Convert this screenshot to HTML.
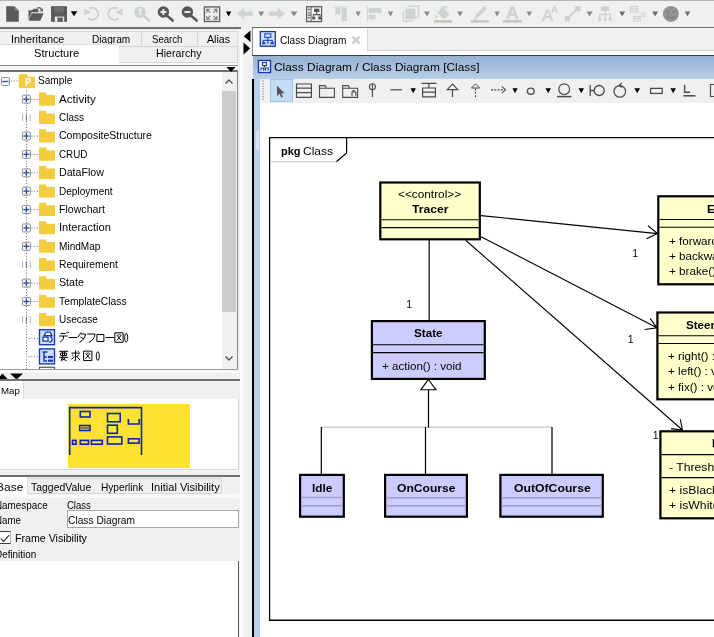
<!DOCTYPE html>
<html><head><meta charset="utf-8">
<style>
*{box-sizing:border-box;margin:0;padding:0}
html,body{width:714px;height:637px;overflow:hidden;background:#f0f0f0;font-family:"Liberation Sans",sans-serif;font-size:10.5px;color:#000}
.a{position:absolute}
.t{position:absolute;white-space:nowrap;line-height:1;transform-origin:0 0}
svg{position:absolute;overflow:visible}
#root{position:absolute;left:0;top:0;width:714px;height:637px;overflow:hidden;will-change:transform}
</style></head><body><div id="root">
<!-- ===== top toolbar ===== -->
<div class="a" style="left:0;top:0;width:714px;height:1px;background:#b4b4b4"></div>
<div class="a" style="left:0;top:27px;width:241px;height:2px;background:#6e6e6e"></div>
<div class="a" style="left:252px;top:27px;width:462px;height:1.5px;background:#6e6e6e"></div>
<svg style="left:0;top:0" width="714" height="27"><g transform="translate(6.2,6.2)"><path d="M0 0H8L12.6 4.6V15.6H0z" fill="#5a5a5a"/><path d="M8.4 0L12.6 4.2H8.4z" fill="#8a8a8a"/></g><g transform="translate(28,6.7)"><path d="M0.5 13.5V3.5H4L5.5 2H9.5L10.5 3.5V5.5H3.5L0.5 13.5z M3.8 6.5H15.7L12.3 14H0.6z" fill="#5a5a5a"/><path d="M8.5 1.2C10.5 -0.3 13 0.2 14 2.2L15 1.5V4.8H11.7L12.8 3.2C12 1.8 10.5 1.5 9.3 2.2z" fill="#6a6a6a"/></g><g transform="translate(51,6.2)"><path d="M0 0H16V15.6H0z" fill="#5a5a5a"/><rect x="3.2" y="0" width="9.6" height="6" fill="#6e6e6e"/><rect x="3.8" y="10.4" width="9.4" height="5.2" fill="#e8e8e8"/><rect x="6.2" y="11.4" width="5.6" height="4.2" fill="#5a5a5a"/><rect x="5" y="12" width="1.4" height="3" fill="#f0f0f0"/></g><path d="M70.8 11.2H77.3L74.05 16.2z" fill="#000"/><g transform="translate(83.7,6.4)"><path d="M5.5 2.4A5.9 5.9 0 1 1 4.4 11.6" fill="none" stroke="#cfd2d2" stroke-width="2.1"/><path d="M0.4 1.6V8.8L7.4 6.2z" fill="#cfd2d2"/></g><g transform="translate(106.9,6.4)"><path d="M10.5 2.4A5.9 5.9 0 1 0 11.6 11.6" fill="none" stroke="#cfd2d2" stroke-width="2.1"/><path d="M15.6 1.6V8.8L8.6 6.2z" fill="#cfd2d2"/></g><g transform="translate(134.2,6.2)"><circle cx="5.6" cy="5.8" r="5.7" fill="#cfd2d2"/><path d="M9 9.4L14.8 14.4" stroke="#cfd2d2" stroke-width="2.6" stroke-linecap="round"/><path d="M4.4 4L6.2 3V9" stroke="#f0f0f0" stroke-width="1.6" fill="none"/></g><g transform="translate(157.8,6.2)"><circle cx="5.6" cy="5.8" r="5.7" fill="#565656"/><path d="M9 9.4L14.8 14.4" stroke="#565656" stroke-width="2.6" stroke-linecap="round"/><path d="M2.6 5.8H8.6M5.6 2.8V8.8" stroke="#ececec" stroke-width="2"/></g><g transform="translate(181.8,6.2)"><circle cx="5.6" cy="5.8" r="5.7" fill="#565656"/><path d="M9 9.4L14.8 14.4" stroke="#565656" stroke-width="2.6" stroke-linecap="round"/><path d="M2.6 5.8H8.6" stroke="#ececec" stroke-width="2"/></g><g transform="translate(203.8,6.3)"><rect x="0.6" y="0.6" width="15.2" height="14.6" fill="#ededed" stroke="#5a5a5a" stroke-width="1.3"/><path d="M3 6.4V3H6.4M3 3L6.4 6.4 M9.6 3H13V6.4M13 3L9.6 6.4 M3 9.6V13H6.4M3 13L6.4 9.6 M9.6 13H13V9.6M13 13L9.6 9.6" fill="none" stroke="#767676" stroke-width="1.1"/></g><path d="M226 11.5H231.2L228.6 16.4z" fill="#000"/><g transform="translate(237,8)"><path d="M0 5.6L7.2 0V3.4H15.8V7.8H7.2V11.2z" fill="#cfd2d2"/></g><path d="M258 11.6H264.3L261.15 16.4z" fill="#8c8c8c"/><g transform="translate(269,8)"><path d="M16 5.6L8.8 0V3.4H0.2V7.8H8.8V11.2z" fill="#cfd2d2"/></g><path d="M290.6 11.6H297.5L294.05 16.4z" fill="#8c8c8c"/><g transform="translate(306,6.1)"><g transform="scale(1,1.06)"><rect x="0.6" y="0.6" width="15" height="14" fill="#f4f4f4" stroke="#5a5a5a" stroke-width="1.2"/><path d="M5 0.6V14.6" stroke="#5a5a5a" stroke-width="1"/><path d="M1.8 3.2h2M1.8 6.4h2M1.8 11h2M1.8 8.6H5" stroke="#5a5a5a" stroke-width="1.2"/><rect x="8" y="2.4" width="5.4" height="3.2" fill="#5a5a5a"/><path d="M10.7 5.6V8H7.4V10M10.7 8H14V10" fill="none" stroke="#5a5a5a" stroke-width="1.1"/><rect x="6.2" y="10" width="3" height="2.6" fill="#5a5a5a"/><rect x="12.2" y="10" width="3" height="2.6" fill="#5a5a5a"/></g></g><g transform="translate(333.4,6.5)"><path d="M0 0.5H15" stroke="#cfd2d2" stroke-width="1"/><rect x="2" y="1.5" width="5" height="6.5" fill="#cfd2d2"/><rect x="8.2" y="1.5" width="5.2" height="13" fill="#cfd2d2"/></g><path d="M355.5 11.6H360.8L358.15 16.4z" fill="#8c8c8c"/><g transform="translate(367,6.5)"><path d="M0.5 0V15" stroke="#cfd2d2" stroke-width="1"/><rect x="1.6" y="1.6" width="13" height="5" fill="#cfd2d2"/><rect x="1.6" y="8.4" width="7" height="4.6" fill="#cfd2d2"/></g><path d="M387.8 11.6H393.3L390.55 16.4z" fill="#8c8c8c"/><g transform="translate(402.7,6.3)"><path d="M5 0H15.8V11H12.4" fill="none" stroke="#cfd2d2" stroke-width="1.6"/><rect x="2.6" y="2.4" width="10" height="10.6" fill="#cfd2d2"/><path d="M0.6 4.5V15H10" fill="none" stroke="#cfd2d2" stroke-width="1.4"/></g><path d="M424 11.6H430L427 16.4z" fill="#8c8c8c"/><g transform="translate(434,5.8)"><path d="M3.5 7L9 2L16 8.5L9.5 13.5z" fill="#cfd2d2"/><path d="M7 5C7 1 9 0 11 1.5 M9.5 3C10.5 0.5 12.5 0.5 13.5 2.5" fill="none" stroke="#cfd2d2" stroke-width="1.3"/><path d="M2.2 8.5C0.5 11 1 12.5 2.4 12.5C3.8 12.5 4 11 2.2 8.5z" fill="#cfd2d2"/><rect x="0" y="14.3" width="18" height="2.6" fill="#c8c8be"/></g><path d="M457 11.6H463L460 16.4z" fill="#8c8c8c"/><g transform="translate(470.9,5.8)"><path d="M4 12.5L5.2 8.4L12.8 0.8C14 -0.2 16.6 2 15.4 3.4L8 11z" fill="#cfd2d2"/><path d="M3 13.6L6.5 12" stroke="#cfd2d2" stroke-width="1.2"/><rect x="0" y="14.3" width="18" height="2.6" fill="#c8c8be"/></g><path d="M494.4 11.6H499.8L497.1 16.4z" fill="#8c8c8c"/><g transform="translate(502.8,5.8)"><path d="M3.6 13L8.4 0.6H10.8L15.6 13H13.2L12 9.8H7.2L6 13z M7.9 7.8H11.3L9.6 3z" fill="#cfd2d2" stroke="#cfd2d2" stroke-width="0.7" fill-rule="evenodd"/><rect x="0" y="14.3" width="19.2" height="2.6" fill="#c8c8be"/></g><path d="M526.5 11.6H532L529.25 16.4z" fill="#8c8c8c"/><g transform="translate(541.7,6)"><path d="M0 15L4.6 3.4H7.2L11.8 15H9.4L8.3 12H3.5L2.4 15z M4.2 10H7.6L5.9 5.6z" fill="#cfd2d2" fill-rule="evenodd"/><path d="M9.2 7L11.8 0H13.6L16.4 7H14.8L14.2 5.4H11.3L10.7 7z M11.8 4H13.7L12.7 1.6z" fill="#cfd2d2" fill-rule="evenodd"/></g><g transform="translate(564.8,6)"><path d="M2.5 12.5L13 2.5" stroke="#cfd2d2" stroke-width="1.8"/><rect x="10.4" y="0" width="5.4" height="5.2" fill="#cfd2d2"/><rect x="0" y="10.2" width="5.2" height="5" fill="#cfd2d2"/></g><path d="M586.4 11.6H592.7L589.55 16.4z" fill="#8c8c8c"/><g transform="translate(598.2,6.4)"><rect x="3" y="0" width="8" height="4.6" fill="#cfd2d2"/><path d="M7 4.6V12M1.5 12.5V8H12.2V12.5" fill="none" stroke="#cfd2d2" stroke-width="1.4"/><rect x="0" y="11.6" width="3" height="2.8" fill="#cfd2d2"/><rect x="5.5" y="11.6" width="3" height="2.8" fill="#cfd2d2"/><rect x="10.6" y="11.6" width="3" height="2.8" fill="#cfd2d2"/></g><path d="M619.2 11.6H625.2L622.2 16.4z" fill="#6e6e6e"/><g transform="translate(629.6,5.8)"><path d="M0.5 0.8H8V7H0.5z M0.5 2.9H8 M0.5 5H8" fill="none" stroke="#cfd2d2" stroke-width="1.1"/><path d="M4.2 10.6H10.6V15.2H4.2z M4.2 12.8H10.6" fill="none" stroke="#cfd2d2" stroke-width="1.1"/><rect x="12.4" y="7.4" width="3" height="3" fill="none" stroke="#cfd2d2" stroke-width="1.1"/></g><path d="M652 11.6H658.2L655.1 16.4z" fill="#6e6e6e"/><g transform="translate(662.9,5.9)"><circle cx="8" cy="8" r="8" fill="#929292"/><path d="M3.6 6.6C4.4 5.4 5.6 5.4 6.4 6.6 M9.6 6.6C10.4 5.4 11.6 5.4 12.4 6.6 M3.8 9.8C5.5 13 10.5 13 12.2 9.8" fill="none" stroke="#7c7c7c" stroke-width="1.1"/></g><path d="M684.8 11.6H690.2L687.5 16.4z" fill="#6e6e6e"/></svg>

<!-- tabs --><div class="t" style="left:10.5px;top:35.26px;font-size:10.2px;transform:scale(1.058,1);color:#000;">Inheritance</div><div class="t" style="left:92.4px;top:35.26px;font-size:10.2px;transform:scale(0.991,1);color:#000;">Diagram</div><div class="t" style="left:152.3px;top:35.06px;font-size:10.2px;transform:scale(0.941,1);color:#000;">Search</div><div class="t" style="left:207.3px;top:35.06px;font-size:10.2px;transform:scale(1.04,1);color:#000;">Alias</div>
<div class="a" style="left:0;top:31px;width:238px;height:1px;background:#d8d8d8"></div>
<div class="a" style="left:141px;top:32px;width:1px;height:14px;background:#d4d4d4"></div>
<div class="a" style="left:197px;top:32px;width:1px;height:14px;background:#d4d4d4"></div>
<div class="a" style="left:237px;top:32px;width:1px;height:32px;background:#dcdcdc"></div>
<div class="a" style="left:0;top:46px;width:238px;height:1px;background:#d8d8d8"></div>
<div class="a" style="left:118px;top:46px;width:120px;height:17px;border:1px solid #d4d4d4;background:#f0f0f0"></div>
<div class="a" style="left:0;top:44px;width:118.5px;height:21px;background:#fff;border-top:1px solid #dcdcdc"></div>
<div class="a" style="left:118px;top:63px;width:120px;height:2px;background:#fafafa"></div>
<div class="a" style="left:0;top:65px;width:238px;height:1px;background:#8c8c8c"></div>
<div class="a" style="left:0;top:66px;width:238px;height:4px;background:#f6f6f6"></div>
<div class="a" style="left:0;top:70px;width:238px;height:2px;background:#707070"></div>
<svg style="left:226px;top:67px" width="10" height="5"><path d="M0.5 0H9.5L5 5z" fill="#000"/></svg>

<!-- tree -->
<div class="a" style="left:0;top:72px;width:237px;height:296.5px;background:#fff;overflow:hidden" ><svg style="left:0;top:0" width="221" height="300"><path d="M26.5 18.6 V300" stroke="#6a6a6a" stroke-width="1" stroke-dasharray="1 1.8"/><path d="M11 9H18" stroke="#6a6a6a" stroke-width="1" stroke-dasharray="1 1.8"/><rect x="1.4" y="5.5" width="8" height="8" rx="1" fill="#f8f8f8" stroke="#8e8e8e" stroke-width="1"/><path d="M2.4 9.5H8.4" stroke="#2c4ea0" stroke-width="1.3"/><path d="M18.8 2.3 h8.3 l1.2 2.4 h6.6 v11.2 h-16.1z" fill="#f4cd3e"/><path d="M31.5 27.38H38.5" stroke="#6a6a6a" stroke-width="1" stroke-dasharray="1 1.8"/><rect x="22.4" y="23.28" width="8" height="8" rx="1" fill="#f8f8f8" stroke="#8e8e8e" stroke-width="1"/><path d="M23.4 27.28H29.4" stroke="#2c4ea0" stroke-width="1.3"/><path d="M26.4 24.28V30.28" stroke="#2c4ea0" stroke-width="1.3"/><path d="M39 20.48 h7.4 v2.6 h8.6 v10.6 h-16z" fill="#f4cd3e"/><path d="M22.6 42.16V49.16 M30.2 42.16V49.16" stroke="#b0b0b0" stroke-width="1"/><path d="M26.4 42.66V48.66" stroke="#5a74b4" stroke-width="1.1"/><path d="M39 38.86 h7.4 v2.6 h8.6 v10.6 h-16z" fill="#f4cd3e"/><path d="M31.5 64.14H38.5" stroke="#6a6a6a" stroke-width="1" stroke-dasharray="1 1.8"/><rect x="22.4" y="60.04" width="8" height="8" rx="1" fill="#f8f8f8" stroke="#8e8e8e" stroke-width="1"/><path d="M23.4 64.04H29.4" stroke="#2c4ea0" stroke-width="1.3"/><path d="M26.4 61.04V67.04" stroke="#2c4ea0" stroke-width="1.3"/><path d="M39 57.24 h7.4 v2.6 h8.6 v10.6 h-16z" fill="#f4cd3e"/><path d="M31.5 82.52H38.5" stroke="#6a6a6a" stroke-width="1" stroke-dasharray="1 1.8"/><rect x="22.4" y="78.42" width="8" height="8" rx="1" fill="#f8f8f8" stroke="#8e8e8e" stroke-width="1"/><path d="M23.4 82.42H29.4" stroke="#2c4ea0" stroke-width="1.3"/><path d="M26.4 79.42V85.42" stroke="#2c4ea0" stroke-width="1.3"/><path d="M39 75.62 h7.4 v2.6 h8.6 v10.6 h-16z" fill="#f4cd3e"/><path d="M31.5 100.9H38.5" stroke="#6a6a6a" stroke-width="1" stroke-dasharray="1 1.8"/><rect x="22.4" y="96.8" width="8" height="8" rx="1" fill="#f8f8f8" stroke="#8e8e8e" stroke-width="1"/><path d="M23.4 100.8H29.4" stroke="#2c4ea0" stroke-width="1.3"/><path d="M26.4 97.8V103.8" stroke="#2c4ea0" stroke-width="1.3"/><path d="M39 94 h7.4 v2.6 h8.6 v10.6 h-16z" fill="#f4cd3e"/><path d="M31.5 119.28H38.5" stroke="#6a6a6a" stroke-width="1" stroke-dasharray="1 1.8"/><rect x="22.4" y="115.18" width="8" height="8" rx="1" fill="#f8f8f8" stroke="#8e8e8e" stroke-width="1"/><path d="M23.4 119.18H29.4" stroke="#2c4ea0" stroke-width="1.3"/><path d="M26.4 116.18V122.18" stroke="#2c4ea0" stroke-width="1.3"/><path d="M39 112.38 h7.4 v2.6 h8.6 v10.6 h-16z" fill="#f4cd3e"/><path d="M31.5 137.66H38.5" stroke="#6a6a6a" stroke-width="1" stroke-dasharray="1 1.8"/><rect x="22.4" y="133.56" width="8" height="8" rx="1" fill="#f8f8f8" stroke="#8e8e8e" stroke-width="1"/><path d="M23.4 137.56H29.4" stroke="#2c4ea0" stroke-width="1.3"/><path d="M26.4 134.56V140.56" stroke="#2c4ea0" stroke-width="1.3"/><path d="M39 130.76 h7.4 v2.6 h8.6 v10.6 h-16z" fill="#f4cd3e"/><path d="M31.5 156.04H38.5" stroke="#6a6a6a" stroke-width="1" stroke-dasharray="1 1.8"/><rect x="22.4" y="151.94" width="8" height="8" rx="1" fill="#f8f8f8" stroke="#8e8e8e" stroke-width="1"/><path d="M23.4 155.94H29.4" stroke="#2c4ea0" stroke-width="1.3"/><path d="M26.4 152.94V158.94" stroke="#2c4ea0" stroke-width="1.3"/><path d="M39 149.14 h7.4 v2.6 h8.6 v10.6 h-16z" fill="#f4cd3e"/><path d="M31.5 174.42H38.5" stroke="#6a6a6a" stroke-width="1" stroke-dasharray="1 1.8"/><rect x="22.4" y="170.32" width="8" height="8" rx="1" fill="#f8f8f8" stroke="#8e8e8e" stroke-width="1"/><path d="M23.4 174.32H29.4" stroke="#2c4ea0" stroke-width="1.3"/><path d="M26.4 171.32V177.32" stroke="#2c4ea0" stroke-width="1.3"/><path d="M39 167.52 h7.4 v2.6 h8.6 v10.6 h-16z" fill="#f4cd3e"/><path d="M22.6 189.2V196.2 M30.2 189.2V196.2" stroke="#b0b0b0" stroke-width="1"/><path d="M26.4 189.7V195.7" stroke="#5a74b4" stroke-width="1.1"/><path d="M39 185.9 h7.4 v2.6 h8.6 v10.6 h-16z" fill="#f4cd3e"/><path d="M31.5 211.18H38.5" stroke="#6a6a6a" stroke-width="1" stroke-dasharray="1 1.8"/><rect x="22.4" y="207.08" width="8" height="8" rx="1" fill="#f8f8f8" stroke="#8e8e8e" stroke-width="1"/><path d="M23.4 211.08H29.4" stroke="#2c4ea0" stroke-width="1.3"/><path d="M26.4 208.08V214.08" stroke="#2c4ea0" stroke-width="1.3"/><path d="M39 204.28 h7.4 v2.6 h8.6 v10.6 h-16z" fill="#f4cd3e"/><path d="M31.5 229.56H38.5" stroke="#6a6a6a" stroke-width="1" stroke-dasharray="1 1.8"/><rect x="22.4" y="225.46" width="8" height="8" rx="1" fill="#f8f8f8" stroke="#8e8e8e" stroke-width="1"/><path d="M23.4 229.46H29.4" stroke="#2c4ea0" stroke-width="1.3"/><path d="M26.4 226.46V232.46" stroke="#2c4ea0" stroke-width="1.3"/><path d="M39 222.66 h7.4 v2.6 h8.6 v10.6 h-16z" fill="#f4cd3e"/><path d="M22.6 244.34V251.34 M30.2 244.34V251.34" stroke="#b0b0b0" stroke-width="1"/><path d="M26.4 244.84V250.84" stroke="#5a74b4" stroke-width="1.1"/><path d="M39 241.04 h7.4 v2.6 h8.6 v10.6 h-16z" fill="#f4cd3e"/><path d="M28.5 266.32H38.5" stroke="#6a6a6a" stroke-width="1" stroke-dasharray="1 1.8"/><path d="M28.5 284.7H38.5" stroke="#6a6a6a" stroke-width="1" stroke-dasharray="1 1.8"/><path d="M28.5 303.08H38.5" stroke="#6a6a6a" stroke-width="1" stroke-dasharray="1 1.8"/><rect x="39.5" y="257.72" width="15" height="15" fill="#d0e0f8" stroke="#1a3cb0" stroke-width="1.4"/><path d="M46 260.22 h4 l2 3.5 h-8z M43 265.22 h5 v4 h-5z M50 264.72 c3 1 3 5 -1 5.5" fill="#fff" stroke="#1a3cb0" stroke-width="1.3"/><rect x="39.5" y="276.9" width="15" height="15" fill="#d0e0f8" stroke="#1a3cb0" stroke-width="1.4"/><path d="M42.5 279.9 h5 M44 279.9 v9 h3 M44 284.9 h3" fill="none" stroke="#1a3cb0" stroke-width="1.5"/><rect x="48" y="283.9" width="5" height="2.2" fill="#1a3cb0"/><rect x="48" y="287.6" width="5" height="2.2" fill="#1a3cb0"/><rect x="39.5" y="295.28" width="15" height="15" fill="#fff" stroke="#555" stroke-width="1.2"/></svg><div class="t" style="left:24.9px;top:5.28px;font-size:11px;font-weight:bold;transform:scale(0.8,1);color:#fff;">P</div><div class="t" style="left:37.5px;top:3.31px;font-size:10.5px;transform:scale(0.963,1);color:#000;">Sample</div><div class="t" style="left:58.8px;top:21.69px;font-size:10.5px;transform:scale(1.107,1);color:#000;">Activity</div><div class="t" style="left:58.8px;top:40.07px;font-size:10.5px;transform:scale(0.948,1);color:#000;">Class</div><div class="t" style="left:58.8px;top:58.45px;font-size:10.5px;transform:scale(1.001,1);color:#000;">CompositeStructure</div><div class="t" style="left:58.8px;top:76.83px;font-size:10.5px;transform:scale(0.936,1);color:#000;">CRUD</div><div class="t" style="left:58.8px;top:95.21px;font-size:10.5px;transform:scale(1.012,1);color:#000;">DataFlow</div><div class="t" style="left:58.8px;top:113.59px;font-size:10.5px;transform:scale(0.957,1);color:#000;">Deployment</div><div class="t" style="left:58.8px;top:131.97px;font-size:10.5px;transform:scale(1.008,1);color:#000;">Flowchart</div><div class="t" style="left:58.8px;top:150.35px;font-size:10.5px;transform:scale(1.059,1);color:#000;">Interaction</div><div class="t" style="left:58.8px;top:168.73px;font-size:10.5px;transform:scale(0.959,1);color:#000;">MindMap</div><div class="t" style="left:58.8px;top:187.11px;font-size:10.5px;transform:scale(0.98,1);color:#000;">Requirement</div><div class="t" style="left:58.8px;top:205.49px;font-size:10.5px;transform:scale(1.016,1);color:#000;">State</div><div class="t" style="left:58.8px;top:223.87px;font-size:10.5px;transform:scale(0.982,1);color:#000;">TemplateClass</div><div class="t" style="left:58.8px;top:242.25px;font-size:10.5px;transform:scale(0.952,1);color:#000;">Usecase</div><svg style="left:0;top:0" width="221" height="300"><path transform="translate(58.6,260)" d="M2 1.5H7 M0.5 4H9 M5 4C5 7 4 8.5 1.5 10 M8 0L8.8 1.2 M9.3 -0.4L10 0.8" fill="none" stroke="#000" stroke-width="1"/><path transform="translate(67.8,260)" d="M1 5.5H9.5" fill="none" stroke="#000" stroke-width="1"/><path transform="translate(77,260)" d="M4 0.5L1 5 M4 2H8.5C8 6 6 8.5 2.5 10.3 M3.5 5L6.5 6.8" fill="none" stroke="#000" stroke-width="1"/><path transform="translate(86.2,260)" d="M1 2H8.8C8.5 6 6.5 8.6 2.5 10.3" fill="none" stroke="#000" stroke-width="1"/><path transform="translate(95.4,260)" d="M1.5 2.5H8.5V9.5H1.5z" fill="none" stroke="#000" stroke-width="1"/><path transform="translate(104.6,260)" d="M1 5.5H9.5" fill="none" stroke="#000" stroke-width="1"/><path transform="translate(113.8,260)" d="M1 0.8H9.3V10.3H1z M3 3L7.5 8.5 M7.5 3L3 8.5 M4.2 2.2L5 3.4 M6 2.2L6.6 3.2" fill="none" stroke="#000" stroke-width="1"/><path transform="translate(123,260)" d="M3.2 1.5C1.2 1.5 1.2 10 3.2 10C5.2 10 5.2 1.5 3.2 1.5z" fill="none" stroke="#000" stroke-width="1"/><path transform="translate(58.6,278.3)" d="M0.5 1H9.5 M2 2.8H8V5.2H2z M4 1V5.2 M6 1V5.2 M0.5 7H9.5 M4.5 5.5L2.5 10.3 M3 8.3L8 10.3 M7 7.2L3 10.5" fill="none" stroke="#000" stroke-width="1"/><path transform="translate(70.6,278.3)" d="M5 0V10C5 10.5 4.5 10.5 3.5 10 M0.8 2.8H9.4 M7 0.5L8 1.6 M1.5 4.5L3 5.8 M0.8 9L4 6.5 M8.5 4.3L6.2 6.3 M5.5 5.5L9.5 9.8" fill="none" stroke="#000" stroke-width="1"/><path transform="translate(82.6,278.3)" d="M1 0.8H9.3V10.3H1z M3 3L7.5 8.5 M7.5 3L3 8.5 M4.2 2.2L5 3.4 M6 2.2L6.6 3.2" fill="none" stroke="#000" stroke-width="1"/><path transform="translate(94.6,278.3)" d="M3.2 1.5C1.2 1.5 1.2 10 3.2 10C5.2 10 5.2 1.5 3.2 1.5z" fill="none" stroke="#000" stroke-width="1"/></svg></div>
<div class="a" style="left:237px;top:72px;width:1px;height:297px;background:#8a8a8a"></div>
<!-- scrollbar -->
<div class="a" style="left:221.5px;top:72px;width:15px;height:296.5px;background:#f0f0f0"></div>
<div class="a" style="left:221.5px;top:91px;width:14.5px;height:221px;background:#cdcdcd"></div>
<svg style="left:225px;top:79px" width="8" height="5"><path d="M0.5 4.5L4 1L7.5 4.5" fill="none" stroke="#505050" stroke-width="1.3"/></svg>
<svg style="left:225px;top:356px" width="8" height="5"><path d="M0.5 0.5L4 4L7.5 0.5" fill="none" stroke="#505050" stroke-width="1.3"/></svg>
<div class="a" style="left:0;top:368.5px;width:238px;height:1px;background:#9a9a9a"></div>
<div class="a" style="left:0;top:369.5px;width:238px;height:3px;background:#f8f8f8"></div>

<!-- splitter arrows -->
<svg style="left:0;top:373px" width="24" height="7"><path d="M-3 6.5L2.5 0.5L8 6.5z M10 0.5H23L16.5 6.5z" fill="#000"/></svg>
<div class="a" style="left:0;top:379px;width:241px;height:1.5px;background:#707070"></div>

<!-- map -->
<div class="a" style="left:0;top:381px;width:24px;height:18px;background:#fff;border-right:1px solid #dcdcdc"></div>
<div class="a" style="left:0;top:398.5px;width:238.5px;height:71px;background:#fff;border-right:1px solid #d0d0d0;border-bottom:1px solid #d8d8d8"></div>
<div class="a" style="left:68px;top:404px;width:122px;height:63.5px;background:#ffe132"></div>
<svg style="left:68px;top:404px" width="122" height="64" ><path d="M1.7 51V3.6H73.5V51" fill="none" stroke="#0c20b4" stroke-width="1.6"/><path d="M22.5 10L39 14M22.5 12L39 25M20 14L39 36M17 27V35M6 35H29" stroke="#f2e860" stroke-width="0.8" fill="none"/><rect x="12.3" y="7.5" width="9.7" height="5.5" fill="#fde540" stroke="#0c20b4" stroke-width="1.6"/><rect x="11.7" y="21.5" width="10.3" height="5" fill="#fde540" stroke="#0c20b4" stroke-width="1.6"/><rect x="12.5" y="22.6" width="8.5" height="2.6" fill="#8a7a3c"/><rect x="4.5" y="36.4" width="3.5" height="3.8" fill="#fde540" stroke="#0c20b4" stroke-width="1.6"/><rect x="12.3" y="36.4" width="8.2" height="3.8" fill="#fde540" stroke="#0c20b4" stroke-width="1.6"/><rect x="23.4" y="36.4" width="10.9" height="3.8" fill="#fde540" stroke="#0c20b4" stroke-width="1.6"/><rect x="39.5" y="9.5" width="12.7" height="8.3" fill="#fde540" stroke="#0c20b4" stroke-width="1.6"/><rect x="39.5" y="21.2" width="9.8" height="8.1" fill="#fde540" stroke="#0c20b4" stroke-width="1.6"/><rect x="39.5" y="32.9" width="14.3" height="7.1" fill="#fde540" stroke="#0c20b4" stroke-width="1.6"/><path d="M60.4 15V20H71.2V15" fill="#fde540" stroke="#0c20b4" stroke-width="1.6"/><rect x="60.4" y="34.8" width="10.7" height="4.3" fill="#fde540" stroke="#0c20b4" stroke-width="1.6"/></svg>
<div class="a" style="left:0;top:475px;width:241px;height:1.5px;background:#707070"></div>

<!-- property -->
<div class="a" style="left:27px;top:478px;width:194.5px;height:16px;border:1px solid #d4d4d4;background:#f0f0f0"></div>
<div class="a" style="left:0;top:477px;width:27.5px;height:17.5px;background:#fff;border-right:1px solid #dcdcdc"></div>
<div class="a" style="left:0;top:494.2px;width:238.6px;height:3.7px;background:#f9f9f9"></div><div class="a" style="left:67px;top:510.4px;width:172px;height:17.3px;background:#fff;border:1.2px solid #a6a6a6"></div>
<div class="a" style="left:0;top:531.2px;width:11px;height:12.4px;background:#fff;border-top:1.2px solid #3c3c3c;border-bottom:1.2px solid #3c3c3c;border-right:1px solid #b8b8b8"></div>
<div class="a" style="left:0;top:560.5px;width:239px;height:77px;background:#fff;border-right:1.5px solid #5c6068"></div>

<div class="t" style="left:34.3px;top:48.12px;font-size:10.6px;transform:scale(1.049,1);color:#000;">Structure</div><div class="t" style="left:156.3px;top:49.29px;font-size:10.4px;transform:scale(1.022,1);color:#000;">Hierarchy</div><div class="t" style="left:0.9px;top:385.67px;font-size:9.6px;transform:scale(1.012,1);color:#000;">Map</div><div class="t" style="left:-4px;top:482.01px;font-size:10.5px;transform:scale(1.145,1);color:#000;">Base</div><div class="t" style="left:31px;top:482.01px;font-size:10.5px;transform:scale(0.995,1);color:#000;">TaggedValue</div><div class="t" style="left:100.6px;top:482.01px;font-size:10.5px;transform:scale(0.964,1);color:#000;">Hyperlink</div><div class="t" style="left:150.6px;top:482.01px;font-size:10.5px;transform:scale(1.054,1);color:#000;">Initial Visibility</div><div class="t" style="left:-4.6px;top:499.61px;font-size:10.5px;transform:scale(0.939,1);color:#000;">Namespace</div><div class="t" style="left:67px;top:499.61px;font-size:10.5px;transform:scale(0.906,1);color:#000;">Class</div><div class="t" style="left:-4.6px;top:514.61px;font-size:10.5px;transform:scale(0.925,1);color:#000;">Name</div><div class="t" style="left:68.3px;top:514.61px;font-size:10.5px;transform:scale(0.973,1);color:#000;">Class Diagram</div><div class="t" style="left:15px;top:533.31px;font-size:10.5px;transform:scale(1.013,1);color:#000;">Frame Visibility</div><div class="t" style="left:-4.9px;top:548.81px;font-size:10.5px;transform:scale(0.941,1);color:#000;">Definition</div><svg style="left:0;top:532.5px" width="11" height="11"><path d="M0.8 5.6L3.6 8.4L9.2 2.2" fill="none" stroke="#333" stroke-width="1.2"/></svg><!-- splitter -->
<div class="a" style="left:240px;top:29px;width:3px;height:608px;background:#fbfbfb"></div>
<svg style="left:243px;top:30px" width="8" height="25"><path d="M7.5 0.5V12L0.8 6.2z M0.5 12.5V24.5L7.2 18.5z" fill="#000"/></svg>

<!-- ===== editor ===== -->
<div class="a" style="left:252px;top:28.5px;width:116px;height:27px;background:#fff;border-left:1px solid #8c8c8c;border-right:1px solid #d8d8d8"></div>
<div class="a" style="left:253px;top:28.2px;width:461px;height:1.3px;background:#fcfcfc"></div><div class="a" style="left:367px;top:50px;width:347px;height:1px;background:#cfd2d2"></div>
<div class="a" style="left:253px;top:50.5px;width:461px;height:4.5px;background:#fff"></div>
<div class="a" style="left:252px;top:54.8px;width:462px;height:1.5px;background:#3c3c3c"></div>
<div class="a" style="left:252.5px;top:56.3px;width:462px;height:22.5px;background:linear-gradient(#97b1d3,#b8d0e9)"></div>
<div class="a" style="left:254px;top:78.5px;width:6px;height:559px;background:#b8d1eb"></div>
<div class="a" style="left:252.2px;top:79px;width:2px;height:558px;background:#000"></div>
<div class="a" style="left:260px;top:78.7px;width:454px;height:24px;background:#f0f0f0"></div>
<div class="a" style="left:260px;top:102.6px;width:454px;height:535px;background:#fff"></div>
<div class="a" style="left:269.5px;top:79.3px;width:23px;height:22.5px;background:#c4dcf4;border:1px solid #a4c4e8"></div>
<div class="a" style="left:255.8px;top:130.3px;width:3.6px;height:19.5px;background:#d6e2f2;border-top:1px solid #d8d0e2"></div><svg style="left:0;top:0" width="714" height="80"><rect x="260.3" y="31.6" width="15" height="14.6" fill="#d6e4f8" stroke="#1238b0" stroke-width="1.3"/><rect x="264.8" y="33.8" width="6" height="3.6" fill="#dce8fa" stroke="#2a56c0" stroke-width="1.2"/><path d="M267.8 37.4V43.8M263.3 43.6V40.4H272.3V43.6" fill="none" stroke="#2a56c0" stroke-width="1.3"/><rect x="262" y="42" width="3.4" height="2.4" fill="#2a56c0"/><rect x="270.4" y="42" width="3.4" height="2.4" fill="#2a56c0"/><path d="M352.6 36.6L359.6 43.6M359.6 36.6L352.6 43.6" stroke="#cdd0d0" stroke-width="2.5"/><rect x="258.5" y="60.5" width="12" height="12" fill="#fff" stroke="#1238b0" stroke-width="1.4"/><rect x="262.4" y="62.6" width="4.2" height="3" fill="#fff" stroke="#1238b0" stroke-width="1.1"/><path d="M264.5 65.6V67.6M261 70.8V68H263.6V70.8M265.6 70.8V68H268.2V70.8M263.6 69.2H265.6" fill="none" stroke="#1238b0" stroke-width="1.1"/></svg><div class="t" style="left:279.8px;top:33.57px;font-size:11.6px;transform:scale(0.873,1);color:#000;">Class Diagram</div><div class="t" style="left:274.2px;top:61.54px;font-size:11.4px;transform:scale(1.044,1);color:#000;">Class Diagram / Class Diagram [Class]</div><svg style="left:0;top:0" width="714" height="110"><rect x="262.4" y="80.5" width="1.6" height="1.2" fill="#9a9a9a"/><rect x="263.6" y="81.3" width="1" height="1" fill="#fff"/><rect x="262.4" y="83.1" width="1.6" height="1.2" fill="#9a9a9a"/><rect x="263.6" y="83.9" width="1" height="1" fill="#fff"/><rect x="262.4" y="85.7" width="1.6" height="1.2" fill="#9a9a9a"/><rect x="263.6" y="86.5" width="1" height="1" fill="#fff"/><rect x="262.4" y="88.3" width="1.6" height="1.2" fill="#9a9a9a"/><rect x="263.6" y="89.1" width="1" height="1" fill="#fff"/><rect x="262.4" y="90.9" width="1.6" height="1.2" fill="#9a9a9a"/><rect x="263.6" y="91.7" width="1" height="1" fill="#fff"/><rect x="262.4" y="93.5" width="1.6" height="1.2" fill="#9a9a9a"/><rect x="263.6" y="94.3" width="1" height="1" fill="#fff"/><rect x="262.4" y="96.1" width="1.6" height="1.2" fill="#9a9a9a"/><rect x="263.6" y="96.9" width="1" height="1" fill="#fff"/><rect x="262.4" y="98.7" width="1.6" height="1.2" fill="#9a9a9a"/><rect x="263.6" y="99.5" width="1" height="1" fill="#fff"/><path d="M277 85.8V96L279.4 93.8L281.2 97.6L283 96.8L281.2 93.2H284.6z" fill="#565656"/><path d="M296.5 84H311.4V97.4H296.5z M296.5 88.2H311.4 M296.5 92.6H311.4" fill="none" stroke="#4a4a4a" stroke-width="1.2"/><path d="M319.5 97.4V85.6H325.2L326.4 88.2H334.4V97.4z M319.5 88.2H326.4" fill="none" stroke="#4a4a4a" stroke-width="1.1"/><path d="M342.7 97.4V85.6H348.4L349.6 88.2H357.6V97.4z M342.7 88.2H349.6 M352 96V92H355.8V96 M353.2 92V90.6H354.6" fill="none" stroke="#4a4a4a" stroke-width="1.1"/><circle cx="372.4" cy="86.8" r="3" fill="none" stroke="#4a4a4a" stroke-width="1.1"/><path d="M372.4 84V97" stroke="#4a4a4a" stroke-width="1.1"/><path d="M390.5 89.8H402" stroke="#4a4a4a" stroke-width="1.2"/><path d="M410.5 88.3H415.9L413.2 93.3z" fill="#000"/><path d="M421.5 83.4H436.5 M428.9 83.4V88 M422.6 88H435.4V96.8H422.6z M422.6 92.2H435.4" fill="none" stroke="#4a4a4a" stroke-width="1.2"/><path d="M452.5 84L457.8 89.6H447.2z" fill="#f4f4f4" stroke="#4a4a4a" stroke-width="1.1"/><path d="M452.5 89.6V97" stroke="#4a4a4a" stroke-width="1.2"/><path d="M475.5 83.8L479.6 88H471.4z" fill="#f4f4f4" stroke="#4a4a4a" stroke-width="1"/><path d="M475.5 88.4V97.4" stroke="#4a4a4a" stroke-width="1.2" stroke-dasharray="2 1.4"/><path d="M491 89.8H503" stroke="#4a4a4a" stroke-width="1.2" stroke-dasharray="2 1.3"/><path d="M501.8 86.4L505.6 89.8L501.8 93.2" fill="none" stroke="#4a4a4a" stroke-width="1.1"/><path d="M512.4 88.3H517.7L515.05 93.3z" fill="#000"/><ellipse cx="530.8" cy="91.2" rx="3.4" ry="3.1" fill="none" stroke="#4a4a4a" stroke-width="1.4"/><path d="M545.4 88.3H551L548.2 93.3z" fill="#000"/><circle cx="564.2" cy="89.2" r="5.4" fill="none" stroke="#4a4a4a" stroke-width="1.2"/><path d="M557 96.6H571.4" stroke="#4a4a4a" stroke-width="1.5"/><path d="M578.5 88.3H584L581.25 93.3z" fill="#000"/><path d="M590.2 85V96 M590.2 90.5H594" stroke="#4a4a4a" stroke-width="1.3"/><circle cx="599.2" cy="90.5" r="5" fill="none" stroke="#4a4a4a" stroke-width="1.3"/><circle cx="619.8" cy="91.4" r="5.8" fill="none" stroke="#4a4a4a" stroke-width="1.2"/><path d="M621.8 83L619 85.6L622 87.6" fill="none" stroke="#4a4a4a" stroke-width="1.1"/><path d="M634.4 88.3H640L637.2 93.3z" fill="#000"/><rect x="650.6" y="88.4" width="11.6" height="5" fill="#f8f8f8" stroke="#4a4a4a" stroke-width="1.3"/><path d="M670.4 88.3H675.9L673.15 93.3z" fill="#000"/><path d="M684.6 85V92.2H690" fill="none" stroke="#4a4a4a" stroke-width="1.4"/><path d="M683.4 95.8H695.6" stroke="#4a4a4a" stroke-width="1.5"/><path d="M714.5 84.5H710.5V96.5H714.5" fill="none" stroke="#4a4a4a" stroke-width="1.2"/></svg>
<svg style="left:0;top:0" width="714" height="637"><path d="M269.6 620.9V137.55H720" fill="none" stroke="#000" stroke-width="1.25"/><path d="M269 620.2H720" stroke="#000" stroke-width="1.4"/><path d="M346.6 137.5V153L336.3 161.7" fill="none" stroke="#000" stroke-width="1.2"/><path d="M270 161.7H336.3" stroke="#d2d2d2" stroke-width="1.2"/><path d="M481 215.6L657.5 233.6M648 225.8L657.5 233.6L646.5 238.7" fill="none" stroke="#000" stroke-width="1.1"/><path d="M481 236.7L657 327.8M650 318.3L657 327.8L644.7 329.5" fill="none" stroke="#000" stroke-width="1.1"/><path d="M465.9 240.5L682.4 430M680.3 419.4L682.4 430L671 428.6" fill="none" stroke="#000" stroke-width="1.1"/><path d="M429.2 240V321" stroke="#000" stroke-width="1.2"/><path d="M321.3 427.2H552.1" stroke="#c4c4c4" stroke-width="1.2"/><path d="M428.5 390V427.6M321.3 427V474.5M425.5 427V474.5M552 427V474.5" stroke="#000" stroke-width="1.2"/><path d="M428.4 379.5L436 389.8H420.8z" fill="#fff" stroke="#000" stroke-width="1.1"/><rect x="380.3" y="182.5" width="99.5" height="56.8" fill="#ffffcc" stroke="#000" stroke-width="2.2"/><path d="M381.4 219.7H478.7" stroke="#000" stroke-width="1.1"/><path d="M381.4 227.6H478.7" stroke="#000" stroke-width="1.1"/><rect x="371.9" y="321.1" width="112.9" height="57.8" fill="#ccccff" stroke="#000" stroke-width="2.2"/><path d="M373 344.8H483.7" stroke="#000" stroke-width="1.1"/><path d="M373 352.6H483.7" stroke="#000" stroke-width="1.1"/><rect x="300.1" y="474.9" width="43.7" height="41.8" fill="#ccccff" stroke="#000" stroke-width="2.2"/><path d="M301.2 497.5H342.7" stroke="#9e9eca" stroke-width="1.5"/><path d="M301.2 505.7H342.7" stroke="#9e9eca" stroke-width="1.5"/><rect x="385.1" y="474.9" width="81.8" height="41.8" fill="#ccccff" stroke="#000" stroke-width="2.2"/><path d="M386.2 497.8H465.8" stroke="#9e9eca" stroke-width="1.5"/><path d="M386.2 505.8H465.8" stroke="#9e9eca" stroke-width="1.5"/><rect x="500.4" y="474.9" width="102.4" height="41.8" fill="#ccccff" stroke="#000" stroke-width="2.2"/><path d="M501.5 497.8H601.7" stroke="#9e9eca" stroke-width="1.5"/><path d="M501.5 505.8H601.7" stroke="#9e9eca" stroke-width="1.5"/><rect x="658.3" y="196.3" width="100.6" height="88" fill="#ffffcc" stroke="#000" stroke-width="2.2"/><path d="M659.4 219.5H757.8" stroke="#000" stroke-width="1.1"/><path d="M659.4 227.2H757.8" stroke="#000" stroke-width="1.1"/><rect x="657.4" y="312.5" width="101.5" height="86.8" fill="#ffffcc" stroke="#000" stroke-width="2.2"/><path d="M658.5 335.7H757.8" stroke="#000" stroke-width="1.1"/><path d="M658.5 343.5H757.8" stroke="#000" stroke-width="1.1"/><rect x="660.4" y="431.3" width="98.5" height="87" fill="#ffffcc" stroke="#000" stroke-width="2.2"/><path d="M661.5 454.6H757.8" stroke="#000" stroke-width="1.1"/><path d="M661.5 477.6H757.8" stroke="#000" stroke-width="1.1"/></svg>
<div class="t" style="left:280.6px;top:145.72px;font-size:10.6px;font-weight:bold;transform:scale(1.04,1);color:#000;">pkg</div><div class="t" style="left:303.2px;top:145.72px;font-size:10.6px;transform:scale(1.136,1);color:#000;">Class</div><div class="t" style="left:397.5px;top:189.53px;font-size:10px;transform:scale(1.182,1);color:#000;">&lt;&lt;control&gt;&gt;</div><div class="t" style="left:411.8px;top:203.58px;font-size:11px;font-weight:bold;transform:scale(1.108,1);color:#000;">Tracer</div><div class="t" style="left:413.7px;top:328.48px;font-size:11px;font-weight:bold;transform:scale(1.059,1);color:#000;">State</div><div class="t" style="left:382.3px;top:360.95px;font-size:10.8px;transform:scale(1.072,1);color:#000;">+ action() : void</div><div class="t" style="left:312.2px;top:483.08px;font-size:11px;font-weight:bold;transform:scale(1.077,1);color:#000;">Idle</div><div class="t" style="left:397.3px;top:483.08px;font-size:11px;font-weight:bold;transform:scale(1.1,1);color:#000;">OnCourse</div><div class="t" style="left:514.3px;top:483.08px;font-size:11px;font-weight:bold;transform:scale(1.111,1);color:#000;">OutOfCourse</div><div class="t" style="left:707.1px;top:203.98px;font-size:11px;font-weight:bold;transform:scale(1.05,1);color:#000;">Engine</div><div class="t" style="left:685.5px;top:319.88px;font-size:11px;font-weight:bold;transform:scale(1.05,1);color:#000;">Steering</div><div class="t" style="left:712.3px;top:437.68px;font-size:11px;font-weight:bold;transform:scale(1.05,1);color:#000;">LightSensor</div><div class="t" style="left:668.7px;top:236.15px;font-size:10.8px;transform:scale(1.08,1);color:#000;">+ forward() : void</div><div class="t" style="left:668.7px;top:251.15px;font-size:10.8px;transform:scale(1.08,1);color:#000;">+ backward() : void</div><div class="t" style="left:668.7px;top:266.35px;font-size:10.8px;transform:scale(1.08,1);color:#000;">+ brake() : void</div><div class="t" style="left:668.2px;top:351.15px;font-size:10.8px;transform:scale(1.08,1);color:#000;">+ right() : void</div><div class="t" style="left:668.2px;top:366.15px;font-size:10.8px;transform:scale(1.08,1);color:#000;">+ left() : void</div><div class="t" style="left:668.2px;top:381.65px;font-size:10.8px;transform:scale(1.08,1);color:#000;">+ fix() : void</div><div class="t" style="left:669.3px;top:461.75px;font-size:10.8px;transform:scale(1.13,1);color:#000;">- Threshold : int</div><div class="t" style="left:669.3px;top:484.85px;font-size:10.8px;transform:scale(1.13,1);color:#000;">+ isBlack() : boolean</div><div class="t" style="left:669.3px;top:499.55px;font-size:10.8px;transform:scale(1.13,1);color:#000;">+ isWhite() : boolean</div><div class="t" style="left:406.3px;top:299.41px;font-size:10.5px;color:#000;">1</div><div class="t" style="left:632.3px;top:247.61px;font-size:10.5px;color:#000;">1</div><div class="t" style="left:627.8px;top:334.11px;font-size:10.5px;color:#000;">1</div><div class="t" style="left:652.8px;top:430.41px;font-size:10.5px;color:#000;">1</div>
</div></body></html>
